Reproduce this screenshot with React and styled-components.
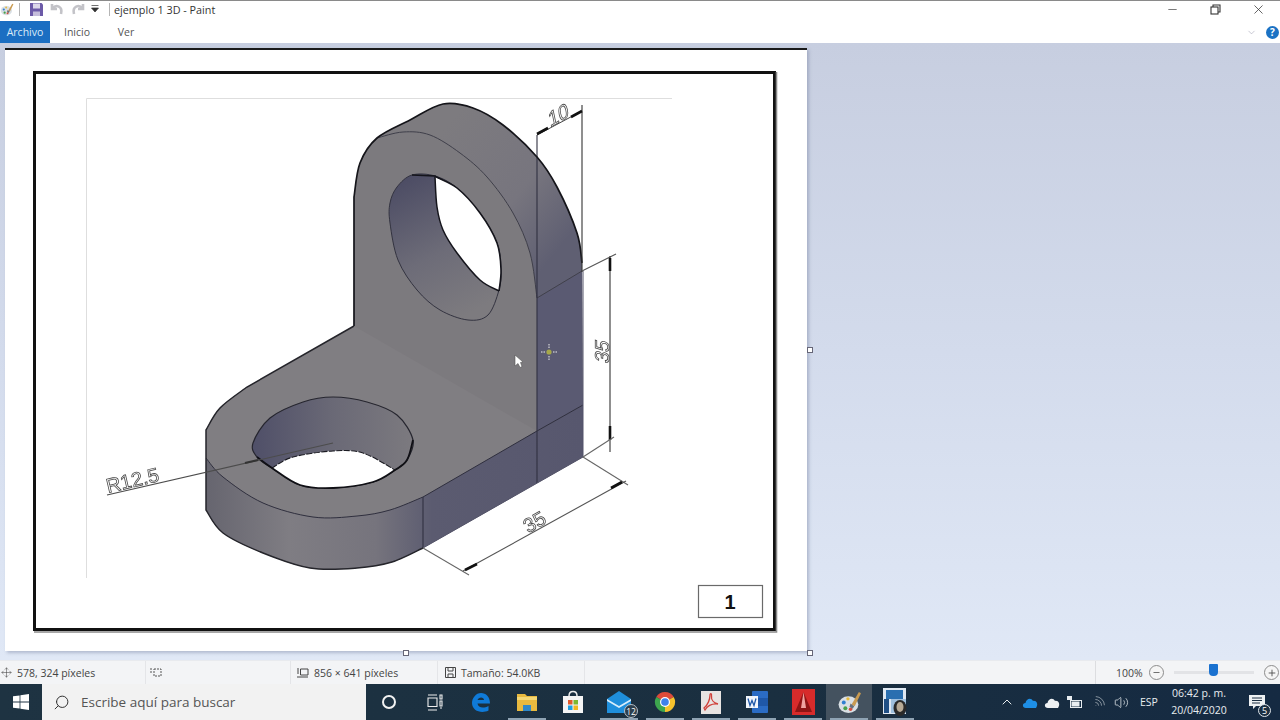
import React from "react";
import styled, { createGlobalStyle } from "styled-components";
import { Search, Minus, X, ChevronDown, ChevronUp, Plus, Move, Volume2, Wifi } from "lucide-react";

const GlobalStyle = createGlobalStyle`
  html, body {
    margin: 0;
    padding: 0;
    height: 100%;
    overflow: hidden;
    background: #fff;
  }
  body {
    font-family: "Open Sans", "Liberation Sans", sans-serif;
  }
`;

const Window = styled.div`
  width: 1280px;
  height: 720px;
  display: flex;
  flex-direction: column;
  overflow: hidden;
`;

const TitleBar = styled.div`
  height: 16px;
  padding-bottom: 4px;
  flex: none;
  border-top: 1px solid #8a8a8a;
  display: flex;
  align-items: center;
  background: #fff;
`;

const QuickIcon = styled.span`
  width: ${(props) => props.$w || 20}px;
  height: 16px;
  display: flex;
  align-items: center;
  justify-content: center;
  flex: none;
`;

const TitleRule = styled.span`
  width: 1px;
  height: 13px;
  background: #b5b5b5;
  flex: none;
  margin: 0 ${(props) => props.$gap || 6}px;
`;

const TitleText = styled.span`
  font-size: 10.8px;
  color: #333;
  margin-left: -2px;
  white-space: nowrap;
`;

const WindowButtons = styled.div`
  margin-left: auto;
  display: flex;
  align-items: center;
`;

const WindowButton = styled.span`
  width: 43px;
  height: 16px;
  display: flex;
  align-items: center;
  justify-content: center;
  color: #333;
`;

const Ribbon = styled.div`
  height: 22px;
  flex: none;
  display: flex;
  align-items: stretch;
  background: #fff;
  font-size: 10.5px;
`;

const Tab = styled.div`
  width: ${(props) => props.$w}px;
  display: flex;
  align-items: center;
  justify-content: center;
  color: ${(props) => (props.$active ? "#dcebf8" : "#555")};
  background: ${(props) => (props.$active ? "#1b6ec2" : "transparent")};
`;

const RibbonEnd = styled.div`
  margin-left: auto;
  display: flex;
  align-items: center;
  gap: 9px;
  padding-right: 1px;
  color: #aab;
`;

const HelpDot = styled.span`
  width: 13px;
  height: 13px;
  border-radius: 50%;
  background: #1b72c4;
  color: #fff;
  font-size: 10px;
  font-weight: 700;
  display: flex;
  align-items: center;
  justify-content: center;
`;

const Workspace = styled.div`
  position: relative;
  flex: 1;
  min-height: 0;
  padding: 5px 0 0 5px;
  background: linear-gradient(180deg, #c7cee0 0%, #d3dbec 50%, #e0e8f6 100%);
`;

const Canvas = styled.div`
  width: 802px;
  height: 603px;
  background: #fff;
  border-top: 2px solid #1a1a1a;
  box-sizing: border-box;
  box-shadow: 2px 2px 3px rgba(120, 130, 160, 0.45);
`;

const DrawingSvg = styled.svg`
  display: block;
  filter: blur(0.4px);
`;

const Handle = styled.span`
  position: absolute;
  left: ${(props) => props.$x}px;
  top: ${(props) => props.$y}px;
  width: 4px;
  height: 4px;
  background: #fff;
  border: 1px solid #667;
`;

const StatusBar = styled.div`
  height: 24px;
  flex: none;
  display: flex;
  align-items: center;
  background: #f3f4f6;
  border-top: 1px solid #e8eaee;
  box-sizing: border-box;
  font-size: 10.5px;
  color: #444;
`;

const StatusCell = styled.div`
  width: ${(props) => props.$w}px;
  height: 100%;
  flex: none;
  box-sizing: border-box;
  display: flex;
  align-items: center;
  gap: 5px;
  padding-left: ${(props) => props.$pad || 6}px;
  border-right: 1px solid #e4e5e8;
  white-space: nowrap;
`;

const ZoomPart = styled.div`
  margin-left: auto;
  height: 100%;
  width: 185px;
  box-sizing: border-box;
  display: flex;
  align-items: center;
  border-left: 1px solid #dcdde0;
  padding-left: 20px;
`;

const ZoomLabel = styled.span`
  width: 33px;
  flex: none;
`;

const ZoomButton = styled.span`
  width: 13px;
  height: 13px;
  border: 1px solid #8c8c8c;
  border-radius: 50%;
  display: flex;
  align-items: center;
  justify-content: center;
  flex: none;
  background: #f5f5f5;
  color: #444;
`;

const ZoomTrack = styled.div`
  position: relative;
  width: 80px;
  height: 3px;
  margin: 0 10px;
  background: #e2e3e6;
  flex: none;
`;

const ZoomThumb = styled.span`
  position: absolute;
  left: 35px;
  top: -7px;
  width: 9px;
  height: 12px;
  background: #1b72d0;
  border-radius: 1px 1px 4px 4px;
`;

const Taskbar = styled.div`
  height: 36px;
  flex: none;
  display: flex;
  align-items: stretch;
  background: linear-gradient(90deg, #1e3342 0%, #1a2f40 60%, #152a42 100%);
`;

const StartButton = styled.div`
  width: 42px;
  flex: none;
  display: flex;
  align-items: center;
  justify-content: center;
`;

const SearchBox = styled.div`
  width: 324px;
  flex: none;
  background: #f2f2f2;
  display: flex;
  align-items: center;
  gap: 11px;
  padding-left: 11px;
  box-sizing: border-box;
  font-size: 13.5px;
  color: #555;
`;

const SearchGlyph = styled(Search)`
  transform: scaleX(-1);
  color: #333;
`;

const TaskIcon = styled.div`
  position: relative;
  width: 46px;
  flex: none;
  display: flex;
  align-items: center;
  justify-content: center;
  background: ${(props) => (props.$active ? "#44525f" : "transparent")};

  &::after {
    content: "";
    display: ${(props) => (props.$running ? "block" : "none")};
    position: absolute;
    left: 4px;
    right: 4px;
    bottom: 0;
    height: 2px;
    background: #8fa3b3;
  }
`;

const Badge = styled.span`
  position: absolute;
  right: 4px;
  bottom: 2px;
  width: 14px;
  height: 14px;
  border-radius: 50%;
  background: #2e3f4d;
  border: 1px solid #b5c0c8;
  box-sizing: border-box;
  color: #fff;
  font-size: 8.5px;
  display: flex;
  align-items: center;
  justify-content: center;
`;

const Tray = styled.div`
  margin-left: auto;
  display: flex;
  align-items: center;
  color: #e8edf0;
`;

const TrayIcon = styled.span`
  width: ${(props) => props.$w || 23}px;
  display: flex;
  align-items: center;
  justify-content: center;
  flex: none;
`;

const WifiGlyph = styled(Wifi)`
  transform: rotate(45deg);
  color: #aab4bc;
`;

const TrayLabel = styled.span`
  width: 30px;
  margin-left: 3px;
  text-align: center;
  font-size: 10.5px;
  flex: none;
`;

const Clock = styled.div`
  width: 70px;
  text-align: center;
  font-size: 10.5px;
  line-height: 17px;
  flex: none;
`;

const Notify = styled.div`
  position: relative;
  width: 46px;
  height: 100%;
  display: flex;
  align-items: center;
  justify-content: center;
  flex: none;
`;

const NotifyCount = styled.span`
  position: absolute;
  right: 9px;
  bottom: 3px;
  width: 13px;
  height: 13px;
  border-radius: 50%;
  border: 1px solid #dfe5ea;
  background: #1c2f42;
  box-sizing: border-box;
  font-size: 9px;
  color: #fff;
  display: flex;
  align-items: center;
  justify-content: center;
`;

// CAD lettering looks hollow in the picture, so white fill with a thin stroke
const DimText = styled.text`
  font-family: "Liberation Sans", sans-serif;
  font-size: ${(props) => props.$size || 20}px;
  fill: #fff;
  stroke: #4a4a4a;
  stroke-width: 0.8px;
  text-anchor: middle;
`;

const SheetNumber = styled.text`
  font-family: "Liberation Sans", sans-serif;
  font-size: 20px;
  font-weight: 700;
  fill: #111;
  text-anchor: middle;
`;

// catmull-rom through the points, starting from the current pen position
const curveTo = (pts) => {
  let d = "";
  for (let i = 0; i < pts.length - 1; i++) {
    const p0 = pts[Math.max(i - 1, 0)];
    const p1 = pts[i];
    const p2 = pts[i + 1];
    const p3 = pts[Math.min(i + 2, pts.length - 1)];
    const c1 = [p1[0] + (p2[0] - p0[0]) / 6, p1[1] + (p2[1] - p0[1]) / 6];
    const c2 = [p2[0] - (p3[0] - p1[0]) / 6, p2[1] - (p3[1] - p1[1]) / 6];
    d += `C${c1[0]} ${c1[1]} ${c2[0]} ${c2[1]} ${p2[0]} ${p2[1]} `;
  }
  return d;
};

const ring = (pts) => {
  const n = pts.length;
  let d = `M${pts[0][0]} ${pts[0][1]} `;
  for (let i = 0; i < n; i++) {
    const p0 = pts[(i - 1 + n) % n];
    const p1 = pts[i];
    const p2 = pts[(i + 1) % n];
    const p3 = pts[(i + 2) % n];
    d += `C${p1[0] + (p2[0] - p0[0]) / 6} ${p1[1] + (p2[1] - p0[1]) / 6} ${p2[0] - (p3[0] - p1[0]) / 6} ${p2[1] - (p3[1] - p1[1]) / 6} ${p2[0]} ${p2[1]} `;
  }
  return d + "Z";
};

const topArc = [[354, 197], [360, 163], [377, 138], [410, 120], [443, 104], [473, 108], [503, 125], [537, 157], [557, 187], [577, 233], [582, 263]];
const cornerArc = [[247, 387], [220, 408], [206, 430]];
const bottomArc = [[206, 510], [223, 533], [263, 553], [310, 568], [357, 568], [392, 562], [423, 548]];
const innerEdge = [[206, 458], [223, 477], [263, 503], [313, 517], [357, 516], [390, 510], [423, 497]];
const rimArc = [[377, 138], [403, 132], [430, 135], [460, 153], [487, 177], [513, 213], [530, 253], [537, 298]];

const upperOuter = [[435, 177], [457, 188], [480, 213], [497, 243], [501, 270], [499, 291]];
const upperInner = [[499, 291], [480, 280], [457, 253], [443, 230], [437, 207], [435, 177]];
const upperRing = [[412, 175], [435, 176], [457, 188], [480, 213], [497, 243], [501, 270], [499, 290], [488, 315], [468, 320], [440, 310], [417, 290], [398, 260], [390, 223], [390, 203], [397, 187]];

const lowerRing = [[253, 443], [270, 418], [303, 402], [333, 397], [367, 402], [397, 415], [413, 440], [407, 460], [395, 470], [373, 482], [333, 488], [300, 485], [272, 468], [257, 457]];
const lowerTop = [[272, 468], [293, 457], [333, 451], [363, 453], [395, 470]];
const lowerBottom = [[395, 470], [373, 482], [333, 488], [300, 485], [272, 468]];
const lowerRim = [[257, 457], [272, 468], [300, 485], [333, 488], [373, 482], [395, 470], [407, 460], [413, 440]];

const outline = `M354 326 L354 197 ${curveTo(topArc)} L583 457 L423 548 ${curveTo([...bottomArc].reverse())} L206 430 ${curveTo([...cornerArc].reverse())} Z`;
const floorTop = `M354 326 L537 431 L423 497 ${curveTo([...innerEdge].reverse())} L206 430 ${curveTo([...cornerArc].reverse())} Z`;
const baseFront = `M206 458 ${curveTo(innerEdge)} L537 431 L583 405 L583 457 L423 548 ${curveTo([...bottomArc].reverse())} Z`;
const rim = `M377 138 ${curveTo(rimArc)} L582 271 L582 263 ${curveTo([...topArc.slice(2)].reverse())} Z`;

function PaintIcon({ size = 22 }) {
  return (
    <svg width={size} height={size} viewBox="0 0 24 24">
      <ellipse cx="11" cy="14" rx="9.5" ry="8" fill="#d9dfe4" />
      <circle cx="6.5" cy="12" r="1.9" fill="#2f7fd0" />
      <circle cx="8" cy="17.5" r="1.9" fill="#48a04a" />
      <circle cx="13" cy="18.5" r="1.7" fill="#d24a3a" />
      <circle cx="10.5" cy="8.5" r="1.6" fill="#e5b93a" />
      <path d="M14 14 L21 2 L23 3 L17 15.5 Z" fill="#c99a50" />
      <path d="M13 13 L16.5 15.5 L15 18 L12 16 Z" fill="#68707a" />
    </svg>
  );
}

function Drawing() {
  return (
    <DrawingSvg width="802" height="601" viewBox="5 50 802 601">
      <defs>
        <linearGradient id="rimShade" x1="0.35" y1="0.1" x2="1" y2="0.6">
          <stop offset="0" stopColor="#7d7b7f" />
          <stop offset="0.6" stopColor="#77757e" />
          <stop offset="1" stopColor="#5f5f72" />
        </linearGradient>
        <linearGradient id="frontShade" x1="0" y1="0" x2="1" y2="0">
          <stop offset="0" stopColor="#66656f" />
          <stop offset="0.22" stopColor="#7f7d83" />
          <stop offset="0.45" stopColor="#76747d" />
          <stop offset="0.6" stopColor="#5b5b70" />
          <stop offset="1" stopColor="#57576e" />
        </linearGradient>
        <linearGradient id="upperShade" x1="0.2" y1="0" x2="0.6" y2="1">
          <stop offset="0" stopColor="#4c4c64" />
          <stop offset="0.55" stopColor="#6d6c78" />
          <stop offset="1" stopColor="#7d7b7f" />
        </linearGradient>
        <linearGradient id="lowerShade" x1="0" y1="0" x2="1" y2="0">
          <stop offset="0" stopColor="#4f4f68" />
          <stop offset="0.5" stopColor="#6a6976" />
          <stop offset="1" stopColor="#7c7a7f" />
        </linearGradient>
      </defs>

      <rect x="34.5" y="72.5" width="740" height="557" fill="none" stroke="#111" strokeWidth="3" />
      <path d="M776.5 72 V632 H34" fill="none" stroke="#8a8a8a" strokeWidth="1.6" />
      <path d="M672 98.5 H86.5 V578" fill="none" stroke="#dedede" strokeWidth="1" />

      <path d={outline} fill="#7c7a7e" />
      <path d={floorTop} fill="#807e82" />
      <path d={rim} fill="url(#rimShade)" />
      <path d="M537 298 L582 271 L583 405 L537 431 Z" fill="#5a5a72" />
      <path d={baseFront} fill="url(#frontShade)" />

      <path d={ring(upperRing)} fill="url(#upperShade)" stroke="#333340" strokeWidth="1" />
      <path d={`M435 177 ${curveTo(upperOuter)} ${curveTo(upperInner)} Z`} fill="#fff" />
      <path d={`M412 175 L435 176 ${curveTo(upperOuter)}`} fill="none" stroke="#15151c" strokeWidth="1.6" />
      <path d={`M499 291 ${curveTo(upperInner)}`} fill="none" stroke="#15151c" strokeWidth="1.5" />

      <path d={ring(lowerRing)} fill="url(#lowerShade)" stroke="#26262f" strokeWidth="1.2" />
      <path d={`M272 468 ${curveTo(lowerTop)} ${curveTo(lowerBottom)} Z`} fill="#fff" />
      <path d={`M272 468 ${curveTo(lowerTop)}`} fill="none" stroke="#1b1b22" strokeWidth="1.1" strokeDasharray="6 1.5" />
      <path d={`M257 457 ${curveTo(lowerRim)}`} fill="none" stroke="#101015" strokeWidth="1.8" />

      <path d={`M377 138 ${curveTo(rimArc)} L582 271`} fill="none" stroke="#3f3f4a" strokeWidth="1" />
      <path d={`M206 458 ${curveTo(innerEdge)} L537 431 L583 405`} fill="none" stroke="#2f2f3e" strokeWidth="1" />
      <path d="M537 135 V483" fill="none" stroke="#303040" strokeWidth="1.1" />
      <path d="M423 497 V548" fill="none" stroke="#303040" strokeWidth="1.1" />
      <path d={`M354 326 L354 197 ${curveTo(topArc)}`} fill="none" stroke="#15151a" strokeWidth="1.7" />
      <path d={`M354 326 L247 387 ${curveTo(cornerArc)} L206 510 ${curveTo(bottomArc)}`} fill="none" stroke="#25252b" strokeWidth="1.5" />
      <path d="M423 548 L583 457 V271" fill="none" stroke="#55556a" strokeWidth="1" />

      <path d="M582 105 V272" fill="none" stroke="#333" strokeWidth="1.1" />
      <path d="M537 135 L582 111" fill="none" stroke="#444" strokeWidth="1" />
      <path d="M537 134 L548 128 M571 117 L582 111" fill="none" stroke="#111" strokeWidth="2.6" />
      <DimText transform="translate(560 122) rotate(-30) skewX(-18)">10</DimText>

      <path d="M582 271 L616 254" fill="none" stroke="#555" strokeWidth="1.1" />
      <path d="M610 256 V452" fill="none" stroke="#333" strokeWidth="1.1" />
      <path d="M610 258 V271 M610 426 V440" fill="none" stroke="#111" strokeWidth="2.6" />
      <DimText transform="translate(609 353) rotate(-90) skewX(-14)">35</DimText>
      <path d="M583 457 L614 437" fill="none" stroke="#666" strokeWidth="1.1" />

      <path d="M583 457 L628 485" fill="none" stroke="#666" strokeWidth="1.1" />
      <path d="M423 548 L469 575" fill="none" stroke="#666" strokeWidth="1.1" />
      <path d="M463 571 L626 481" fill="none" stroke="#555" strokeWidth="1.1" />
      <path d="M465 570 L477 564 M611 488 L622 482" fill="none" stroke="#111" strokeWidth="2.6" />
      <DimText transform="translate(538 528) rotate(-30)">35</DimText>

      <path d="M107 495 L333 443" fill="none" stroke="#4c4c4c" strokeWidth="1.1" />
      <path d="M245 463 L258 460" fill="none" stroke="#333" strokeWidth="2.2" />
      <DimText transform="translate(134 487) rotate(-13)">R12.5</DimText>

      <rect x="698.5" y="585.5" width="64" height="32" fill="#fff" stroke="#6a6a6a" strokeWidth="1.2" />
      <SheetNumber x="730" y="609">1</SheetNumber>

      <path d="M515 355 V366 L518 363.5 L520 367.5 L522 366.5 L520.5 362.5 L523 362 Z" fill="#fff" stroke="#555" strokeWidth="0.6" />
      <circle cx="549" cy="352" r="2.6" fill="#a7a94a" />
      <path d="M541 352 H545 M553 352 H557 M549 344 V348 M549 356 V360" stroke="#eee" strokeWidth="1" strokeDasharray="1.5 1" />
    </DrawingSvg>
  );
}

export default function App() {
  return (
    <Window>
      <GlobalStyle />
      <TitleBar>
        <QuickIcon $w={14}><PaintIcon size={15} /></QuickIcon>
        <TitleRule $gap={5} />
        <QuickIcon $w={22}>
          <svg width="15" height="15" viewBox="0 0 15 15">
            <path d="M1 1 H12.5 L14 2.5 V14 H1 Z" fill="#6c5aa8" />
            <rect x="4" y="1.5" width="7" height="5" fill="#dcd7ea" />
            <rect x="4" y="9.5" width="7" height="4.5" fill="#c5bddb" />
          </svg>
        </QuickIcon>
        <QuickIcon $w={20}>
          <svg width="15" height="14" viewBox="0 0 15 14">
            <path d="M2 2 V7 H7 M2.5 6.5 C6 2 13 4 11 12" fill="none" stroke="#c3c3c8" strokeWidth="2.6" />
          </svg>
        </QuickIcon>
        <QuickIcon $w={20}>
          <svg width="15" height="14" viewBox="0 0 15 14">
            <path d="M13 2 V7 H8 M12.5 6.5 C9 2 2 4 4 12" fill="none" stroke="#c3c3c8" strokeWidth="2.6" />
          </svg>
        </QuickIcon>
        <QuickIcon $w={16}>
          <svg width="8" height="8" viewBox="0 0 8 8">
            <path d="M0.5 0.5 H7.5 M0.5 3 H7.5 L4 7 Z" fill="#333" stroke="#333" strokeWidth="0.7" />
          </svg>
        </QuickIcon>
        <TitleRule $gap={6} />
        <TitleText>ejemplo 1 3D - Paint</TitleText>
        <WindowButtons>
          <WindowButton><Minus size={13} strokeWidth={1.2} /></WindowButton>
          <WindowButton>
            <svg width="11" height="11" viewBox="0 0 11 11" fill="none" stroke="#333" strokeWidth="1.1">
              <rect x="1" y="3" width="7" height="7" />
              <path d="M3 3 V1 H10 V8 H8" />
            </svg>
          </WindowButton>
          <WindowButton><X size={15} strokeWidth={1.2} /></WindowButton>
        </WindowButtons>
      </TitleBar>

      <Ribbon>
        <Tab $w={50} $active>Archivo</Tab>
        <Tab $w={54}>Inicio</Tab>
        <Tab $w={44}>Ver</Tab>
        <RibbonEnd>
          <ChevronDown size={11} strokeWidth={1.4} />
          <HelpDot>?</HelpDot>
        </RibbonEnd>
      </Ribbon>

      <Workspace>
        <Canvas><Drawing /></Canvas>
        <Handle $x={807} $y={304} />
        <Handle $x={403} $y={607} />
        <Handle $x={807} $y={607} />
      </Workspace>

      <StatusBar>
        <StatusCell $w={146} $pad={1}>
          <Move size={11} strokeWidth={1.2} />
          <span>578, 324 píxeles</span>
        </StatusCell>
        <StatusCell $w={145} $pad={4}>
          <svg width="12" height="11" viewBox="0 0 12 11" fill="none" stroke="#555" strokeWidth="1">
            <path d="M1 1 V7 M4 2 H11 V9 H4 Z" strokeDasharray="2 1" />
          </svg>
        </StatusCell>
        <StatusCell $w={147} $pad={6}>
          <svg width="12" height="11" viewBox="0 0 12 11" fill="none" stroke="#444" strokeWidth="1">
            <path d="M1 1 V7 M3.5 2 H11 V8 H3.5 Z M0 10 H11" />
          </svg>
          <span>856 × 641 píxeles</span>
        </StatusCell>
        <StatusCell $w={147} $pad={7}>
          <svg width="11" height="11" viewBox="0 0 11 11" fill="none" stroke="#444" strokeWidth="1">
            <path d="M0.5 0.5 H10.5 V10.5 H0.5 Z M3 0.5 V4 H8 V0.5 M3 10.5 V7 H8 V10.5" />
          </svg>
          <span>Tamaño: 54.0KB</span>
        </StatusCell>
        <ZoomPart>
          <ZoomLabel>100%</ZoomLabel>
          <ZoomButton><Minus size={9} strokeWidth={2} /></ZoomButton>
          <ZoomTrack><ZoomThumb /></ZoomTrack>
          <ZoomButton><Plus size={10} strokeWidth={2} /></ZoomButton>
        </ZoomPart>
      </StatusBar>

      <Taskbar>
        <StartButton>
          <svg width="16" height="16" viewBox="0 0 16 16" fill="#fff">
            <path d="M0 2.3 L6.6 1.4 V7.6 H0 Z M7.4 1.3 L16 0 V7.6 H7.4 Z M0 8.4 H6.6 V14.6 L0 13.7 Z M7.4 8.4 H16 V16 L7.4 14.7 Z" />
          </svg>
        </StartButton>
        <SearchBox>
          <SearchGlyph size={17} strokeWidth={1.4} />
          <span>Escribe aquí para buscar</span>
        </SearchBox>
        <TaskIcon>
          <svg width="16" height="16" viewBox="0 0 16 16" fill="none" stroke="#f2f2f2" strokeWidth="2">
            <circle cx="8" cy="8" r="6" />
          </svg>
        </TaskIcon>
        <TaskIcon>
          <svg width="17" height="17" viewBox="0 0 17 17" fill="none" stroke="#eee" strokeWidth="1.1">
            <path d="M1 1 H10 M1 16 H10 M1 4 H10 V12.5 H1 Z M13 1 H15 V5 H13 Z M13 7 H15 V12 H13 Z M13 14 H15" />
          </svg>
        </TaskIcon>
        <TaskIcon>
          <svg width="20" height="21" viewBox="0 0 20 21">
            <path d="M10 1 C15 1 19 5 19 11.5 H6.5 C7 15.5 12 17 17.5 14 V18.5 C10.5 22 1 19 1 11 C1 6 5 1 10 1 Z M6.5 8 H13 C13 4.5 7.5 4.5 6.5 8 Z" fill="#0f7ad8" fillRule="evenodd" />
          </svg>
        </TaskIcon>
        <TaskIcon $running>
          <svg width="20" height="18" viewBox="0 0 20 18">
            <path d="M0 1 H8 L10 3 H20 V18 H0 Z" fill="#e8b93f" />
            <rect x="0" y="4" width="20" height="3" fill="#f4d774" />
            <rect x="6" y="12" width="8" height="6" fill="#2f88c9" />
          </svg>
        </TaskIcon>
        <TaskIcon>
          <svg width="22" height="24" viewBox="0 0 22 24">
            <path d="M7 6 C7 0 15 0 15 6" fill="none" stroke="#eee" strokeWidth="1.5" />
            <rect x="1" y="6" width="20" height="17" fill="#f5f5f5" />
            <rect x="6" y="10" width="4.5" height="4.5" fill="#e25a2b" />
            <rect x="11.5" y="10" width="4.5" height="4.5" fill="#7db82f" />
            <rect x="6" y="15.5" width="4.5" height="4.5" fill="#1f9fe0" />
            <rect x="11.5" y="15.5" width="4.5" height="4.5" fill="#f2b81f" />
          </svg>
        </TaskIcon>
        <TaskIcon $running>
          <svg width="24" height="22" viewBox="0 0 24 22">
            <path d="M0 8 L12 0 L24 8 V22 H0 Z" fill="#1f8fdc" />
            <path d="M0 8 L12 15 L24 8 V10 L12 17 L0 10 Z" fill="#d9eefb" />
          </svg>
          <Badge>12</Badge>
        </TaskIcon>
        <TaskIcon $running>
          <svg width="22" height="22" viewBox="0 0 22 22">
            <path d="M11 11 L2.3 6 A10 10 0 0 1 19.7 6 Z" fill="#dd4b3a" />
            <path d="M11 11 L19.7 6 A10 10 0 0 1 11 21 Z" fill="#f6c22d" />
            <path d="M11 11 L11 21 A10 10 0 0 1 2.3 6 Z" fill="#3da64e" />
            <circle cx="11" cy="11" r="5" fill="#fff" />
            <circle cx="11" cy="11" r="3.8" fill="#3f82ea" />
          </svg>
        </TaskIcon>
        <TaskIcon $running>
          <svg width="20" height="23" viewBox="0 0 20 23">
            <rect width="20" height="23" fill="#e8e4e2" />
            <path d="M3 17 C7 14 9 8 9 4 C9 2 11 2 10.5 5 C10 9 13 12 17 13 C12 12.5 7 14 4 19 Z" fill="none" stroke="#d0413a" strokeWidth="1.3" />
          </svg>
        </TaskIcon>
        <TaskIcon $running>
          <svg width="22" height="22" viewBox="0 0 22 22">
            <rect x="6" width="16" height="22" rx="1" fill="#2b6cc4" />
            <rect x="6" y="7" width="16" height="8" fill="#1f58a8" />
            <rect y="5" width="12" height="12" fill="#f2f6fb" />
            <path d="M2 7.5 L4 14.5 L6 9.5 L8 14.5 L10 7.5" fill="none" stroke="#1f58a8" strokeWidth="1.3" />
          </svg>
        </TaskIcon>
        <TaskIcon $running>
          <svg width="23" height="26" viewBox="0 0 23 26">
            <rect width="23" height="26" fill="#d72b2b" />
            <path d="M11.5 3 L20 23 H3 Z" fill="#8f1414" />
            <path d="M11.5 3 L14 19 H9 Z" fill="#f0a3a0" />
          </svg>
        </TaskIcon>
        <TaskIcon $active $running>
          <PaintIcon size={25} />
        </TaskIcon>
        <TaskIcon $running>
          <svg width="24" height="28" viewBox="0 0 24 28">
            <rect width="23" height="26" fill="#dfe8f2" />
            <rect x="3" y="2" width="17" height="9" fill="#2a6fb0" />
            <rect x="1" y="11" width="5" height="14" fill="#1f4f85" />
            <rect x="8" y="11" width="15" height="14" fill="#9fc0de" />
            <ellipse cx="17" cy="20" rx="6.5" ry="8" fill="#2a2a2a" />
            <ellipse cx="17" cy="19" rx="3.5" ry="5" fill="#b7aa96" />
          </svg>
        </TaskIcon>
        <Tray>
          <TrayIcon $w={24}><ChevronUp size={16} strokeWidth={1.5} /></TrayIcon>
          <TrayIcon $w={22}>
            <svg width="17" height="11" viewBox="0 0 17 11"><path d="M4 11 C0 11 0 6 3.5 6 C4 2 9 0 11 4 C14 3 17 7 14 11 Z" fill="#1e8fe6" /></svg>
          </TrayIcon>
          <TrayIcon $w={22}>
            <svg width="17" height="11" viewBox="0 0 17 11"><path d="M4 11 C0 11 0 6 3.5 6 C4 2 9 0 11 4 C14 3 17 7 14 11 Z" fill="#eef1f3" /></svg>
          </TrayIcon>
          <TrayIcon $w={24}>
            <svg width="16" height="13" viewBox="0 0 16 13" fill="none" stroke="#e8edf0">
              <rect x="0.5" y="0.5" width="4" height="3" fill="#e8edf0" />
              <rect x="3.5" y="4.5" width="11" height="7" />
              <rect x="5" y="6" width="7" height="4" fill="#e8edf0" />
            </svg>
          </TrayIcon>
          <TrayIcon $w={24}><WifiGlyph size={14} strokeWidth={1.2} /></TrayIcon>
          <TrayIcon $w={20}><Volume2 size={15} strokeWidth={1.2} /></TrayIcon>
          <TrayLabel>ESP</TrayLabel>
          <Clock>06:42 p. m.<br />20/04/2020</Clock>
          <Notify>
            <svg width="16" height="15" viewBox="0 0 16 15">
              <path d="M0 0 H16 V11 H7 L4 14 V11 H0 Z" fill="#eef1f3" />
              <path d="M3 3 H13 M3 5.5 H13 M3 8 H11" stroke="#1c2f42" strokeWidth="1" />
            </svg>
            <NotifyCount>5</NotifyCount>
          </Notify>
        </Tray>
      </Taskbar>
    </Window>
  );
}
